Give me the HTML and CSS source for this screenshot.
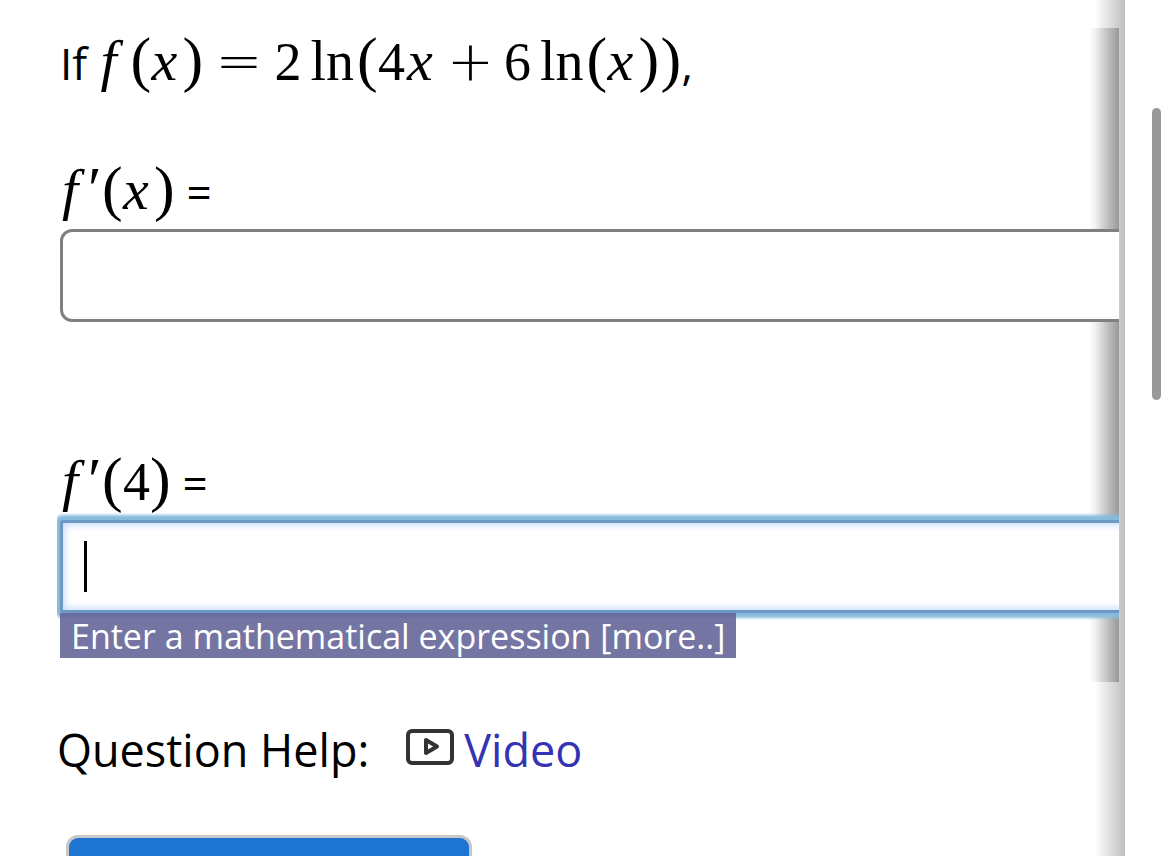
FILE: index.html
```html
<!DOCTYPE html>
<html lang="en">
<head>
<meta charset="utf-8">
<title>Derivative question</title>
<link rel="stylesheet" href="styles.css">
</head>
<body>
<div class="page">
  <main class="content">
    <section class="question">
      <p class="line prompt">If <span class="math"><i>f</i><b>(</b><i class="var">x</i><b>)</b><s class="rel">=</s><span>2</span><span class="fn">ln</span><b>(</b><span>4</span><i class="var">x</i><s>+</s><span>6</span><span class="fn">ln</span><b>(</b><i class="var">x</i><b>)</b><b>)</b></span>,</p>
      <div class="field">
        <label class="line" for="derivative"><span class="math"><i>f</i><sup>′</sup><b>(</b><i class="var">x</i><b>)</b></span> =</label>
        <input class="answer" id="derivative" type="text">
      </div>
      <div class="field">
        <label class="line" for="value"><span class="math"><i>f</i><sup>′</sup><b>(</b><span>4</span><b>)</b></span> =</label>
        <div class="active-field">
          <input class="answer active" id="value" type="text">
          <span class="caret"></span>
          <div class="tip">Enter a mathematical expression [more..]</div>
        </div>
      </div>
    </section>
    <div class="help">
      <span>Question Help:</span>
      <a class="video" href="#video">
        <svg class="video-icon" viewBox="0 0 48 36" aria-hidden="true">
          <rect x="2" y="2" width="44" height="32" rx="4"/>
          <path class="play" d="M20 11v13l11-6.500Z"/>
        </svg>
        <span>Video</span>
      </a>
    </div>
    <button class="submit" type="button" aria-label="Submit"></button>
  </main>
  <div class="scroll"><div class="thumb"></div></div>
</div>
</body>
</html>
```
FILE: styles.css
```css
* { box-sizing: border-box; }
html, body { height: 100%; }
body {
  margin: 0;
  background: #fff;
  color: #000;
  font-family: "Open Sans", "Noto Sans", sans-serif;
  font-size: 45px;
}
.page { display: flex; height: 100%; overflow: hidden; }
.content {
  flex: 1;
  min-width: 0;
  padding: 28px 6px 0 57px;
  background: linear-gradient(to right, rgba(0,0,0,0), rgba(0,0,0,.25)) right / 30px 100% no-repeat;
}
.question {
  height: 654px;
  padding-left: 3px;
  overflow: hidden;
  background: linear-gradient(to right, rgba(0,0,0,0), rgba(0,0,0,.25)) right / 30px 100% no-repeat;
}
.line {
  display: flex;
  align-items: baseline;
  height: 72px;
  margin: 0;
  line-height: 62px;
  white-space: pre;
  font-size: 44px;
}
.prompt { margin-bottom: 57px; }
.math {
  display: inline-flex;
  align-items: baseline;
  font-family: "Liberation Serif", serif;
  font-size: 54px;
}
.math i { width: 30px; margin-left: 2px; font-size: 58px; }
.math b { width: 21px; font-size: 62px; font-weight: 400; }
.math .var { width: 31px; margin-left: 0; }
.math span + .var { margin-left: 2px; }
.math b + b { margin-left: 1px; }
.math .fn { margin: 0 3px 0 9px; font-size: 56px; }
.math s {
  margin: 0 10px 0 9px;
  font-family: "DejaVu Sans", sans-serif;
  font-weight: 200;
  font-size: 56px;
  text-decoration: none;
}
.math .rel { margin: 0 12px; }
.math sup { width: 14px; margin-left: -4px; font-size: 62px; vertical-align: baseline; }
.field + .field { margin-top: 126px; }
.answer {
  display: block;
  width: calc(100% + 40px);
  height: 93px;
  padding: 0 21px;
  border: 3px solid #808080;
  border-radius: 12px;
  background: #fff;
  font: inherit;
  outline: 0;
}
.active-field { position: relative; }
.active {
  border-color: #6c98c2;
  border-radius: 3px;
  box-shadow: 0 0 3px 5px #88badd, inset 0 0 8px 1px #b8d6fb;
}
.caret { position: absolute; left: 24px; top: 21px; width: 3px; height: 51px; background: #000; }
.tip {
  position: absolute;
  left: 0;
  top: 93px;
  padding: 1px 11px 0;
  background: rgba(102,102,153,.9);
  color: #fff;
  font-size: 34px;
  line-height: 44px;
  white-space: nowrap;
}
.help { display: flex; gap: 37px; padding-top: 36px; line-height: 64px; }
.video { display: flex; gap: 10px; color: #3333b3; text-decoration: none; }
.video-icon { width: 48px; height: 36px; margin-top: 11px; fill: none; stroke: #333; stroke-width: 4; stroke-linejoin: round; }
.submit {
  display: block;
  width: 406px;
  height: 90px;
  margin: 53px 0 0 9px;
  border: 3px solid #c8c8c8;
  border-radius: 12px;
  background: #1d74d2;
}
.scroll { flex: 0 0 45px; padding: 108px 9px 0 27px; }
.thumb { height: 292px; border-radius: 5px; background: #999; }
```
